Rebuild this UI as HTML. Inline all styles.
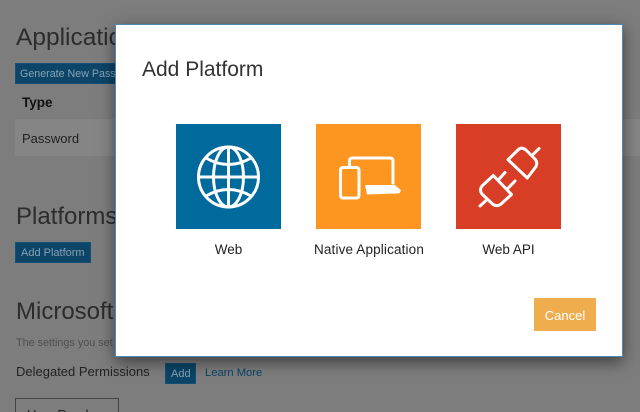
<!DOCTYPE html>
<html style="width:640px;height:412px;overflow:hidden"><head><meta charset="utf-8">
<style>
html,body{margin:0;padding:0}
body{width:640px;height:412px;overflow:hidden;position:relative;background:#7d7d7d;font-family:"Liberation Sans",sans-serif;color:#1c1c1c}
.t{position:absolute;white-space:nowrap;line-height:1}
.b{position:absolute;background:#0c4567;border:1px solid #125075;box-sizing:border-box;color:#86a2b5;font-size:11px;white-space:nowrap;overflow:hidden}
#m{position:absolute;left:115px;top:24px;width:508px;height:333px;box-sizing:border-box;background:#fff;border:1px solid #4a8ab5;box-shadow:0 5px 15px rgba(0,0,0,.5)}
.s{position:absolute;top:124px;width:105px;height:105px}
.l{position:absolute;white-space:nowrap;line-height:1;font-size:13.5px;color:#222;text-align:center}
</style></head><body>
<div class="t" style="left:16px;top:26px;font-size:24.5px;color:#2c2c2c">Application Passwords</div>
<div class="b" style="left:15px;top:63px;width:120px;height:21px;padding:4px 0 0 4px;font-size:10.700px">Generate New Password</div>
<div class="t" style="left:22px;top:96px;font-size:13.500px;font-weight:bold;color:#111">Type</div>
<div style="position:absolute;left:15px;top:119px;width:625px;height:37px;background:#858585"></div>
<div class="t" style="left:22px;top:132px;font-size:13px;color:#222">Password</div>
<div class="t" style="left:16px;top:205px;font-size:24px;color:#2c2c2c">Platforms</div>
<div class="b" style="left:15px;top:242px;width:76px;height:21px;padding:4px 0 0 5px">Add Platform</div>
<div class="t" style="left:16px;top:300px;font-size:24px;color:#2c2c2c">Microsoft Graph</div>
<div class="t" style="left:16px;top:338px;font-size:10.800px;color:#505050">The settings you set</div>
<div class="t" style="left:16px;top:365px;font-size:13px;color:#222">Delegated Permissions</div>
<div class="b" style="left:165px;top:363px;width:31px;height:21px;padding:4px 0 0 5px">Add</div>
<div class="t" style="left:205px;top:368px;font-size:11.200px;color:#0c4567">Learn More</div>
<div style="position:absolute;left:15px;top:398px;width:104px;height:30px;box-sizing:border-box;border:1px solid #444"></div>
<div class="t" style="left:27px;top:408px;font-size:13px;color:#222">User.Read</div>

<div id="m"></div>
<div class="t" style="left:142px;top:59px;font-size:21px;color:#333">Add Platform</div>
<div class="s" style="left:176px;background:#006a9c"></div>
<div class="s" style="left:316px;background:#fc9620"></div>
<div class="s" style="left:456px;background:#d83e26"></div>
<svg style="position:absolute;left:0;top:0" width="640" height="412" viewBox="0 0 640 412" fill="none" stroke="#fff" stroke-width="3" stroke-linecap="round" stroke-linejoin="round">
<g>
<circle cx="228.500" cy="177" r="30"/>
<ellipse cx="228.500" cy="177" rx="15" ry="30"/>
<path d="M228.500 147V207M198.500 177H258.500"/>
<path d="M206 158Q228.500 171 251 158M206 196Q228.500 183 251 196"/>
</g>
<g>
<path d="M349.500 165V161Q349.500 158 352.500 158H390Q393 158 393 161V183"/>
<path d="M365 185H395L400.700 190Q401 193 398 193.500L367 194.500Z" fill="#fff" stroke="none"/>
<rect x="340.500" y="167.500" width="18.500" height="30.500" rx="2.500"/>
<path d="M347 195.500H352.500" stroke="#fc9620" stroke-width="1.600"/>
</g>
<g>
<path d="M508 159.700L519 149Q522 147 526 150L534.500 158.500Q538 162 536 166.500L527.300 178Z"/>
<path d="M533.500 154L539 148.500"/>
<path d="M493.300 175.500L482 186Q479 190 482 194L492.500 204Q496.500 207 500.500 204.500L511.500 194.500Z"/>
<path d="M498.300 180L505 172.500M507.300 189L515 181"/>
<path d="M486 200.500L480 206"/>
</g>
</svg>
<div class="l" style="left:176px;top:243px;width:105px">Web</div>
<div class="l" style="left:296px;top:243px;width:146px;letter-spacing:.15px">Native Application</div>
<div class="l" style="left:456px;top:243px;width:105px">Web API</div>
<div style="position:absolute;left:534px;top:298px;width:62px;height:33px;background:#f0ad4e;color:#fff;font-size:13px;text-align:center;line-height:35px">Cancel</div>
</body></html>
